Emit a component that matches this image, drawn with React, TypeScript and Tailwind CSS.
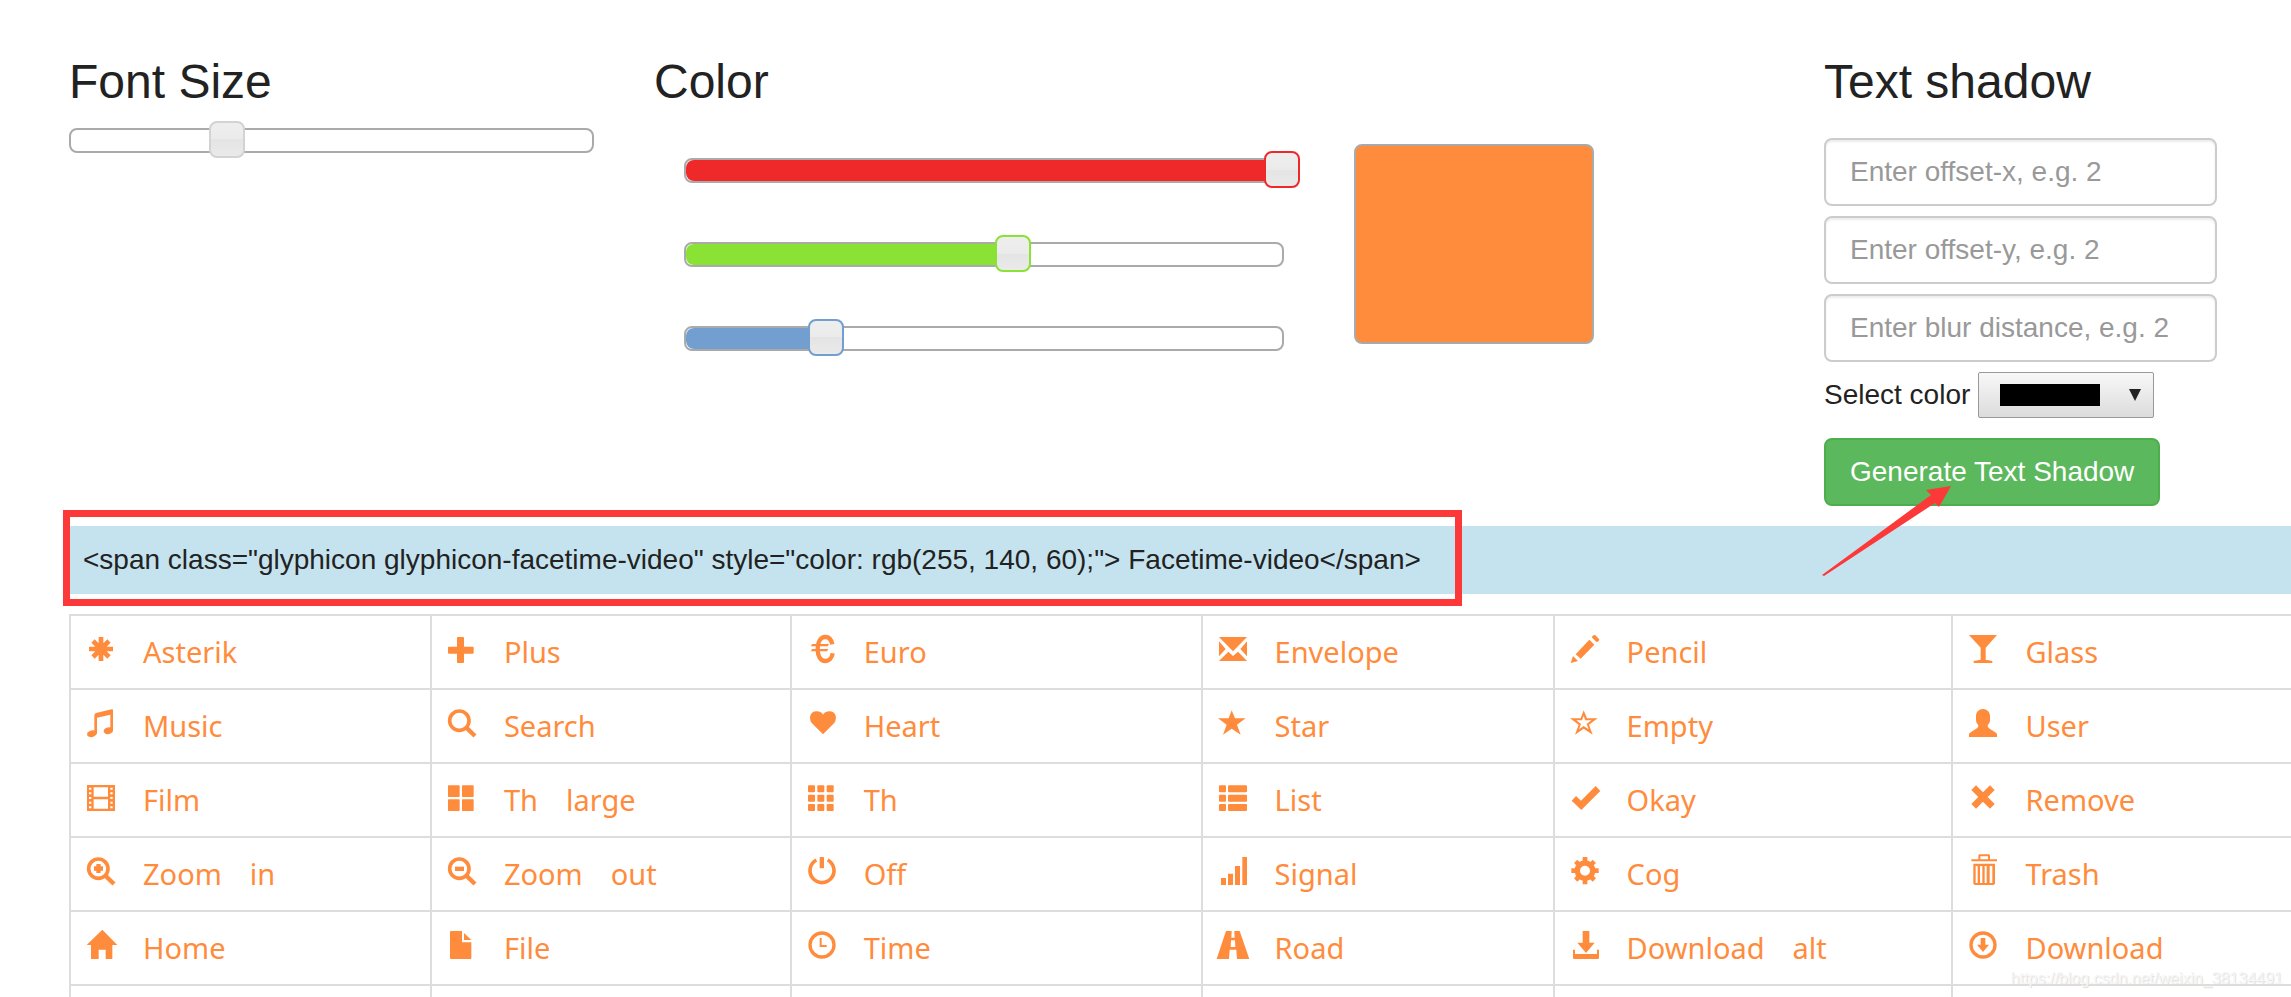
import { useState } from "react";
import type { ReactNode } from "react";
import clsx from "clsx";

const star = "M38 4L48 28H80L54 47L65 77L38 59L12 77L23 47L-3 28H29Z";
const starHole = "M38 21L43 34H61L47 45L53 61L38 51L24 61L30 45L16 34H33Z";

const lens = (
  <>
    <circle cx="34" cy="35" r="29" fill="none" stroke="currentColor" strokeWidth="11" />
    <path d="M55 56L81 81" stroke="currentColor" strokeWidth="13" />
  </>
);

const ring = <circle cx="42" cy="42" r="36" fill="none" stroke="currentColor" strokeWidth="10" />;

const gridRows = [7, 35, 63];

const icons: Record<string, ReactNode> = {
  asterisk: (
    <>
      <path
        d="M42 6V78M6 42H78M18 18L66 66M66 18L18 66"
        stroke="currentColor"
        strokeWidth="14"
      />
      <circle cx="42" cy="42" r="19" />
    </>
  ),
  plus: <path d="M29 6H46L48 8V35H75L77 37V54L75 56H48V82L46 84H29L27 82V56H2L0 54V37L2 35H27V8Z" />,
  euro: (
    <>
      <path
        d="M73 28C70 13 62 6 52 6C38 6 29 20 29 42C29 64 38 78 52 78C63 78 72 70 74 55"
        fill="none"
        stroke="currentColor"
        strokeWidth="13"
      />
      <path d="M13 27H63L59 34H8ZM13 42H61L57 49H8Z" />
    </>
  ),
  envelope: (
    <path d="M0 6H84L42 49ZM0 19L20 42L0 64ZM84 19L64 42L84 64ZM0 78L28 50L42 63L57 50L84 78Z" />
  ),
  pencil: (
    <path d="M-1 84L6 63L21 78ZM14 58L55 14L70 29L29 71ZM62 7L67 1Q70 -1 73 1L84 12Q86 14 84 17L77 22Z" />
  ),
  glass: <path d="M0 0H84L50 38V74L70 78V84H14V78L35 74V38Z" />,
  music: (
    <>
      <path d="M22 19Q22 14 27 12L74 1Q78 0 78 4V66H70V17L30 26V74H22Z" />
      <ellipse cx="15" cy="74" rx="15" ry="10" transform="rotate(-14 15 74)" />
      <ellipse cx="64" cy="65" rx="14" ry="10" transform="rotate(-14 64 65)" />
    </>
  ),
  search: lens,
  heart: (
    <path d="M45 76L12 43C2 32 4 7 26 7C36 7 42 12 45 17C48 12 55 7 64 7C86 7 88 32 78 43Z" />
  ),
  star: <path d={star} />,
  starEmpty: <path fillRule="evenodd" d={star + starHole} />,
  user: (
    <path d="M42 0C54 0 63 9 63 22V34C63 43 57 46 56 50C55 60 80 66 84 75V84H0V75C4 66 29 60 28 50C27 46 21 43 21 34V22C21 9 30 0 42 0Z" />
  ),
  film: (
    <path
      fillRule="evenodd"
      d="M0 6H84V84H0ZM20 13H63V41H20ZM20 49H63V77H20ZM6 14H13V20H6ZM6 28H13V34H6ZM6 42H13V48H6ZM6 56H13V62H6ZM6 70H13V76H6ZM70 14H77V20H70ZM70 28H77V34H70ZM70 42H77V48H70ZM70 56H77V62H70ZM70 70H77V76H70Z"
    />
  ),
  thLarge: (
    <>
      <rect x="0" y="7" width="35" height="35" rx="2" />
      <rect x="42" y="7" width="35" height="35" rx="2" />
      <rect x="0" y="49" width="35" height="35" rx="2" />
      <rect x="42" y="49" width="35" height="35" rx="2" />
    </>
  ),
  th: gridRows.map((y) => (
    <g key={y}>
      <rect x="0" y={y} width="21" height="21" rx="3" />
      <rect x="28" y={y} width="21" height="21" rx="3" />
      <rect x="56" y={y} width="21" height="21" rx="3" />
    </g>
  )),
  list: gridRows.map((y) => (
    <g key={y}>
      <rect x="0" y={y} width="21" height="21" rx="3" />
      <rect x="27" y={y} width="57" height="21" rx="3" />
    </g>
  )),
  ok: <path d="M2 53L15 39L30 53L74 9L88 24L31 81Z" />,
  remove: <path d="M14 14L70 70M70 14L14 70" stroke="currentColor" strokeWidth="20" />,
  zoomIn: (
    <>
      {lens}
      <path d="M28 21H41V28H48V41H41V48H28V41H21V28H28Z" />
    </>
  ),
  zoomOut: (
    <>
      {lens}
      <rect x="21" y="29" width="27" height="13" />
    </>
  ),
  off: (
    <>
      <path
        d="M59 9A36 36 0 1 1 25 9"
        fill="none"
        stroke="currentColor"
        strokeWidth="11"
      />
      <rect x="35" y="0" width="13" height="34" rx="2" />
    </>
  ),
  signal: <path d="M6 63H21V84H6ZM27 50H42V84H27ZM48 27H63V84H48ZM70 0H84V84H70Z" />,
  cog: (
    <>
      <circle cx="42" cy="41" r="23" fill="none" stroke="currentColor" strokeWidth="16" />
      <path
        d="M42 0V18M42 64V82M1 41H19M65 41H83M14 13L26 25M58 57L70 69M70 13L58 25M26 57L14 69"
        stroke="currentColor"
        strokeWidth="14"
      />
    </>
  ),
  trash: (
    <path
      fillRule="evenodd"
      d="M28 7V-5L31 -8H60L63 -5V7H84V13H7V7ZM34 -2V7H57V-2ZM13 20H78V80L74 84H17L13 80ZM20 27V78H26V27ZM33 27V78H40V27ZM47 27V78H53V27ZM62 27V78H70V27Z"
    />
  ),
  home: <path d="M46 -4L91 42H76V84H56V56H35V84H12V42H-1Z" />,
  file: <path d="M8 0H42V34H70V82L68 84H8L6 82V2ZM48 6L70 27H48Z" />,
  time: (
    <>
      {ring}
      <path d="M35 21H41V42H56V48H35Z" />
    </>
  ),
  road: (
    <path
      fillRule="evenodd"
      d="M21 0H38L37 20H47L46 0H62L91 84H54L52 56H32L30 84H-7ZM36 28L35 48H49L48 28Z"
    />
  ),
  downloadAlt: (
    <path d="M35 0H55V35H71L45 66L19 35H35ZM6 56H12V69H78V56H84V82L82 84H8L6 82Z" />
  ),
  download: (
    <>
      {ring}
      <path d="M35 21H49V41H60L42 63L24 41H35Z" />
    </>
  ),
};

const rows: [string, string][][] = [
  [
    ["asterisk", "Asterik"],
    ["plus", "Plus"],
    ["euro", "Euro"],
    ["envelope", "Envelope"],
    ["pencil", "Pencil"],
    ["glass", "Glass"],
  ],
  [
    ["music", "Music"],
    ["search", "Search"],
    ["heart", "Heart"],
    ["star", "Star"],
    ["starEmpty", "Empty"],
    ["user", "User"],
  ],
  [
    ["film", "Film"],
    ["thLarge", "Th large"],
    ["th", "Th"],
    ["list", "List"],
    ["ok", "Okay"],
    ["remove", "Remove"],
  ],
  [
    ["zoomIn", "Zoom in"],
    ["zoomOut", "Zoom out"],
    ["off", "Off"],
    ["signal", "Signal"],
    ["cog", "Cog"],
    ["trash", "Trash"],
  ],
  [
    ["home", "Home"],
    ["file", "File"],
    ["time", "Time"],
    ["road", "Road"],
    ["downloadAlt", "Download alt"],
    ["download", "Download"],
  ],
];

function Icon({ name }: { name: string }) {
  return (
    <svg
      viewBox="0 0 84 84"
      fill="currentColor"
      className="block h-7 w-7 shrink-0 overflow-visible"
      aria-hidden="true"
    >
      {icons[name]}
    </svg>
  );
}

type SliderProps = {
  label: string;
  value: number;
  max: number;
  onChange: (value: number) => void;
  fill?: string;
  thumb: string;
};

function Slider({ label, value, max, onChange, fill, thumb }: SliderProps) {
  return (
    <div className="relative h-[25px] rounded-lg border-2 border-[#aaa] bg-white">
      {fill && (
        <div
          className={clsx("h-full rounded-lg", fill)}
          style={{ width: `${(value / max) * 100}%` }}
        />
      )}
      <input
        type="range"
        aria-label={label}
        min={0}
        max={max}
        value={value}
        onChange={(e) => onChange(Number(e.target.value))}
        className={clsx(
          "absolute -top-[9px] -left-[18px] m-0 block h-[37px] w-[calc(100%+36px)] cursor-pointer appearance-none bg-transparent outline-none",
          "[&::-webkit-slider-thumb]:h-[37px] [&::-webkit-slider-thumb]:w-9 [&::-webkit-slider-thumb]:appearance-none [&::-webkit-slider-thumb]:rounded-lg [&::-webkit-slider-thumb]:border-2",
          "[&::-webkit-slider-thumb]:bg-[linear-gradient(#eeeeee,#ebebeb_50%,#e4e4e4_50%,#eaeaea)]",
          thumb
        )}
      />
    </div>
  );
}

const shadowFields = [
  { id: "offset-x", placeholder: "Enter offset-x, e.g. 2" },
  { id: "offset-y", placeholder: "Enter offset-y, e.g. 2" },
  { id: "blur", placeholder: "Enter blur distance, e.g. 2" },
];

const heading = "text-5xl leading-[53px] font-normal";

export default function App() {
  const [size, setSize] = useState(30);
  const [red, setRed] = useState(255);
  const [green, setGreen] = useState(140);
  const [blue, setBlue] = useState(60);
  const color = `rgb(${red}, ${green}, ${blue})`;

  return (
    <div className="relative h-screen overflow-hidden bg-white pt-[55px] pl-[69px] font-['Liberation_Sans',Arial,sans-serif] text-[28px] leading-10 text-[#222]">
      <div className="grid grid-cols-[585fr_1170fr_467fr]">
        <section className="pr-[60px]">
          <h3 className={heading}>Font Size</h3>
          <div className="mt-5">
            <Slider
              label="Font size"
              value={size}
              max={100}
              onChange={setSize}
              thumb="[&::-webkit-slider-thumb]:border-[#d3d3d3]"
            />
          </div>
        </section>

        <section>
          <h3 className={heading}>Color</h3>
          <div className="mt-9 flex gap-[70px] pr-[230px] pl-[30px]">
            <div className="flex flex-1 flex-col gap-[59px] pt-[14px]">
              <Slider
                label="Red"
                value={red}
                max={255}
                onChange={setRed}
                fill="bg-[#ef2929]"
                thumb="[&::-webkit-slider-thumb]:border-[#ef2929]"
              />
              <Slider
                label="Green"
                value={green}
                max={255}
                onChange={setGreen}
                fill="bg-[#8ae234]"
                thumb="[&::-webkit-slider-thumb]:border-[#8ae234]"
              />
              <Slider
                label="Blue"
                value={blue}
                max={255}
                onChange={setBlue}
                fill="bg-[#729fcf]"
                thumb="[&::-webkit-slider-thumb]:border-[#729fcf]"
              />
            </div>
            <div
              className="h-[200px] w-60 rounded-lg border-2 border-[#aaa]"
              style={{ backgroundColor: color }}
            />
          </div>
        </section>

        <section className="pr-[74px]">
          <h3 className={heading}>Text shadow</h3>
          <div className="mt-[30px] flex flex-col gap-[10px]">
            {shadowFields.map((field) => (
              <input
                key={field.id}
                id={field.id}
                type="text"
                aria-label={field.placeholder}
                placeholder={field.placeholder}
                className="h-[68px] w-full rounded-lg border-2 border-[#ccc] px-6 shadow-[inset_0_2px_2px_rgba(0,0,0,0.075)] outline-none placeholder:text-[#999]"
              />
            ))}
            <div className="flex items-center gap-2">
              <label htmlFor="shadow-color">Select color</label>
              <div className="relative">
                <select
                  id="shadow-color"
                  defaultValue="black"
                  className="block h-[46px] w-44 appearance-none rounded-[2px] border border-[#999] bg-linear-to-b from-[#f8f8f8] to-[#dcdcdc] text-transparent outline-none"
                >
                  <option value="black" className="bg-black" aria-label="black" />
                </select>
                <span className="pointer-events-none absolute top-3 left-[22px] h-[22px] w-[100px] bg-black" />
                <svg
                  viewBox="0 0 12 12"
                  className="pointer-events-none absolute top-[17px] right-[13px] h-3 w-3"
                  aria-hidden="true"
                >
                  <path d="M0 0H12L6 12Z" fill="#222" />
                </svg>
              </div>
            </div>
          </div>
          <div className="relative mt-5 w-fit">
            <button
              type="button"
              className="block h-[68px] rounded-lg border-2 border-[#4cae4c] bg-[#5cb85c] px-6 text-white"
            >
              Generate Text Shadow
            </button>
            <svg
              viewBox="0 0 130 92"
              className="pointer-events-none absolute top-12 -left-0.5 z-10 h-[92px] w-[130px]"
              aria-hidden="true"
            >
              <path d="M0 89L109 9L104 4L129 0L117 21L113 17L2 90Z" fill="#fc3838" />
            </svg>
          </div>
        </section>
      </div>

      <div className="relative mt-5 bg-[#c5e3ef] px-[14px] py-[14px]">
        <code className="font-['Liberation_Sans',Arial,sans-serif]">
          {`<span class="glyphicon glyphicon-facetime-video" style="color: ${color};"> Facetime-video</span>`}
        </code>
        <div className="pointer-events-none absolute -top-4 -bottom-3 -left-1.5 w-[1399px] border-[7px] border-[#fc3838]" />
      </div>

      <table
        className="mt-5 w-full table-fixed border-collapse border-2 border-r-0 border-[#ddd] font-['Noto_Sans',sans-serif] text-[29px] leading-10"
        style={{ color }}
      >
        <colgroup>
          <col className="w-[16.25%]" />
          <col className="w-[16.2%]" />
          <col className="w-[18.5%]" />
          <col className="w-[15.85%]" />
          <col className="w-[17.96%]" />
          <col />
        </colgroup>
        <tbody>
          {rows.map((row) => (
            <tr key={row[0][1]}>
              {row.map(([icon, label]) => (
                <td
                  key={label}
                  className="border-2 border-[#ddd] px-4 py-4 last:border-r-0"
                >
                  <div className="flex h-10 items-baseline gap-7">
                    <Icon name={icon} />
                    {label.split(" ").map((word) => (
                      <span key={word}>{word}</span>
                    ))}
                  </div>
                </td>
              ))}
            </tr>
          ))}
          <tr>
            {rows[0].map(([icon]) => (
              <td key={icon} className="h-[74px] border-2 border-[#ddd] last:border-r-0" />
            ))}
          </tr>
        </tbody>
      </table>

      <div className="pointer-events-none absolute right-2 bottom-1.5 text-base leading-6 text-[#f6f6f6] [text-shadow:1px_1px_1px_#dcdcdc]">
        https://blog.csdn.net/weixin_38134491
      </div>
    </div>
  );
}
